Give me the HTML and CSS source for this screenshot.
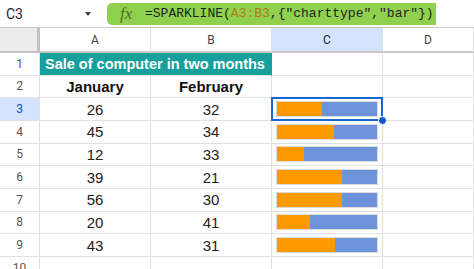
FILE: index.html
```html
<!DOCTYPE html>
<html lang="en">
<head>
  <meta charset="UTF-8">
  <title>Sparkline bar chart</title>
  <link rel="stylesheet" href="styles.css">
</head>
<body>
<div class="toolbar">
  <div class="name-box">C3</div>
  <span class="caret"></span>
  <div class="formula">
    <span class="fx">fx</span>
    <span class="formula-text">=SPARKLINE(<span class="ref">A3:B3</span>,{"charttype","bar"})</span>
  </div>
</div>

<div class="sheet">
  <div class="corner"></div>
  <div class="col-head">A</div>
  <div class="col-head">B</div>
  <div class="col-head active">C</div>
  <div class="col-head">D</div>

  <div class="row-head">1</div>
  <div class="cell title">Sale of computer in two months</div>
  <div class="cell"></div>
  <div class="cell"></div>

  <div class="row-head">2</div>
  <div class="cell bold">January</div>
  <div class="cell bold">February</div>
  <div class="cell"></div>
  <div class="cell"></div>

  <div class="row-head active">3</div>
  <div class="cell">26</div>
  <div class="cell">32</div>
  <div class="cell spark selected">
    <div class="bar"><div class="part" style="width:44.83%"></div></div>
    <span class="handle"></span>
  </div>
  <div class="cell"></div>

  <div class="row-head">4</div>
  <div class="cell">45</div>
  <div class="cell">34</div>
  <div class="cell spark"><div class="bar"><div class="part" style="width:56.96%"></div></div></div>
  <div class="cell"></div>

  <div class="row-head">5</div>
  <div class="cell">12</div>
  <div class="cell">33</div>
  <div class="cell spark"><div class="bar"><div class="part" style="width:26.67%"></div></div></div>
  <div class="cell"></div>

  <div class="row-head">6</div>
  <div class="cell">39</div>
  <div class="cell">21</div>
  <div class="cell spark"><div class="bar"><div class="part" style="width:65%"></div></div></div>
  <div class="cell"></div>

  <div class="row-head">7</div>
  <div class="cell">56</div>
  <div class="cell">30</div>
  <div class="cell spark"><div class="bar"><div class="part" style="width:65.12%"></div></div></div>
  <div class="cell"></div>

  <div class="row-head">8</div>
  <div class="cell">20</div>
  <div class="cell">41</div>
  <div class="cell spark"><div class="bar"><div class="part" style="width:32.79%"></div></div></div>
  <div class="cell"></div>

  <div class="row-head">9</div>
  <div class="cell">43</div>
  <div class="cell">31</div>
  <div class="cell spark"><div class="bar"><div class="part" style="width:58.11%"></div></div></div>
  <div class="cell"></div>

  <div class="row-head">10</div>
  <div class="cell"></div>
  <div class="cell"></div>
  <div class="cell"></div>
  <div class="cell"></div>
</div>
</body>
</html>
```

FILE: styles.css
```css
html, body {
  margin: 0;
  padding: 0;
  background: #fff;
  width: 474px;
  height: 269px;
  overflow: hidden;
  font-family: "Liberation Sans", Arial, sans-serif;
}
.toolbar {
  height: 27px;
  display: flex;
  align-items: center;
  border-bottom: 1px solid #c7c7c7;
}
.name-box {
  width: 79px;
  padding-left: 6px;
  flex-shrink: 0;
  font-family: Roboto, sans-serif;
  font-size: 14px;
  color: #1f1f1f;
}
.caret {
  width: 0;
  height: 0;
  flex-shrink: 0;
  border-left: 3px solid transparent;
  border-right: 3px solid transparent;
  border-top: 4px solid #444;
  margin-right: 16px;
}
.formula {
  width: 329px;
  height: 22px;
  flex-shrink: 0;
  display: flex;
  align-items: center;
  background: #8fd14f;
  border-radius: 5px 0 0 5px;
}
.fx {
  margin-left: 13px;
  width: 25px;
  flex-shrink: 0;
  font-family: "Liberation Serif", serif;
  font-style: italic;
  font-size: 17px;
  color: #4f6b2c;
}
.formula-text {
  font-family: "Liberation Mono", monospace;
  font-size: 13px;
  color: #1f1f1f;
  white-space: nowrap;
}
.ref {
  color: #b07d12;
}
.sheet {
  display: grid;
  grid-template-columns: 40px 111px 121px 111px 1fr;
  grid-template-rows: 25px repeat(10, 22.67px);
}
.sheet > div {
  box-sizing: border-box;
  border-right: 1px solid #e1e1e1;
  border-bottom: 1px solid #e1e1e1;
  display: flex;
  align-items: center;
  justify-content: center;
}
.corner {
  background: #ececec;
}
.sheet > .corner {
  border-right: 3px solid #c2c2c2;
  border-bottom: 2px solid #c2c2c2;
}
.col-head {
  font-family: Roboto, sans-serif;
  font-size: 12px;
  color: #444;
}
.sheet > .col-head {
  border-bottom: 2px solid #c9c9c9;
}
.row-head {
  font-family: Roboto, sans-serif;
  font-size: 12px;
  color: #555;
}
.active {
  background: #d3e3fd;
  color: #0b57d0;
}
.col-head.active {
  color: #1f1f1f;
}
.cell {
  font-size: 15px;
  color: #222;
}
.bold {
  font-weight: bold;
  color: #111;
}
.sheet > .title {
  grid-column: span 2;
  justify-content: flex-start;
  padding-left: 5px;
  background: #17a09b;
  color: #fff;
  font-weight: bold;
  font-size: 14.5px;
  white-space: nowrap;
  border-right-color: #17a09b;
}
.spark {
  padding: 3px 4px;
  position: relative;
}
.bar {
  width: 100%;
  height: 16px;
  box-sizing: border-box;
  border: 1px solid #dcdcdc;
  background: #6d93db;
  display: flex;
}
.part {
  height: 100%;
  background: #ff9900;
}
.selected::after {
  content: "";
  position: absolute;
  left: -1px;
  top: -1px;
  right: -1px;
  bottom: -1px;
  border: 2px solid #1a66d2;
}
.handle {
  position: absolute;
  right: -5px;
  bottom: -5px;
  width: 7px;
  height: 7px;
  border-radius: 50%;
  background: #0b57d0;
  border: 1px solid #fff;
  z-index: 2;
}
```
